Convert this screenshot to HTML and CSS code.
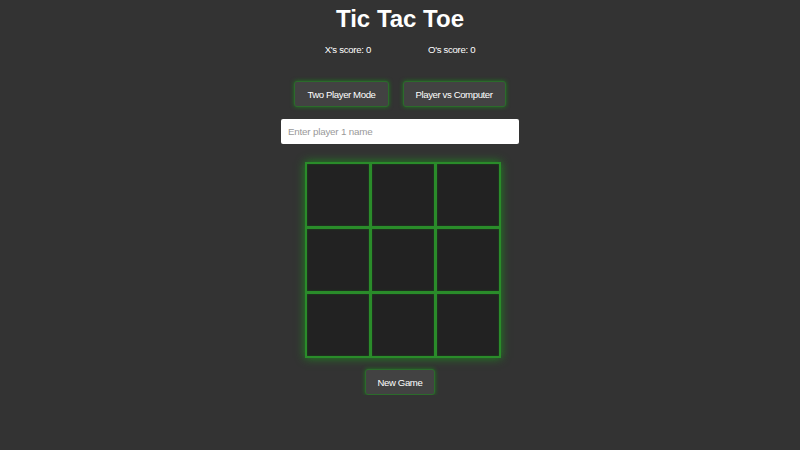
FILE: index.html
```html
<!DOCTYPE html>
<html>
  <head>
    <title>Tic Tac Toe</title>
    <meta charset="UTF-8" />
    <link rel="stylesheet" href="styles.css">
  </head>
  <body>
    <h1>Tic Tac Toe</h1>

    <div class="scores">
      <span id="xScore">X's score: 0</span>
      <span id="oScore">O's score: 0</span>
    </div>

    <div class="modes">
      <button class="btn">Two Player Mode</button>
      <button class="btn">Player vs Computer</button>
    </div>

    <input type="text" id="playerName" placeholder="Enter player 1 name" />

    <div class="board">
      <div class="cell"></div>
      <div class="cell"></div>
      <div class="cell"></div>
      <div class="cell"></div>
      <div class="cell"></div>
      <div class="cell"></div>
      <div class="cell"></div>
      <div class="cell"></div>
      <div class="cell"></div>
    </div>

    <button class="btn new-game">New Game</button>
  </body>
</html>
```

FILE: styles.css
```css
body {
  font-family: "Liberation Sans", Arial, sans-serif;
  background-color: #333;
  color: #fff;
  margin: 0;
  padding: 5px 0 0;
  display: flex;
  flex-direction: column;
  align-items: center;
}

h1 {
  font-size: 24px;
  margin: 0;
  line-height: 28px;
}

.scores {
  display: flex;
  gap: 57px;
  font-size: 9.6px;
  letter-spacing: -0.3px;
  line-height: 14px;
  margin-top: 10px;
}

.modes {
  display: flex;
  gap: 14px;
  margin-top: 24px;
}

.btn {
  font-family: "Liberation Sans", Arial, sans-serif;
  font-size: 9.6px;
  letter-spacing: -0.4px;
  color: #fff;
  background-color: #424242;
  border: 1px solid #2b6b2b;
  border-radius: 3px;
  box-shadow: 0 0 4px #1e7a1e;
  padding: 0 12px;
  height: 26px;
  cursor: pointer;
}

#playerName {
  margin-top: 12px;
  width: 238px;
  height: 25px;
  box-sizing: border-box;
  border: none;
  border-radius: 2px;
  padding: 0 7px;
  font-family: "Liberation Sans", Arial, sans-serif;
  font-size: 9.8px;
  letter-spacing: -0.2px;
}

#playerName::placeholder {
  color: #999;
}

.board {
  margin-top: 18px;
  margin-left: 6px;
  display: grid;
  grid-template-columns: repeat(3, 62px);
  grid-template-rows: repeat(3, 62px);
  gap: 3px;
  padding: 2px;
  background-color: #2a8c2a;
  box-shadow: 0 0 9px #1f8a1f;
}

.cell {
  background-color: #222;
  box-shadow: inset 0 0 2px #1a5a1a;
}

.new-game {
  margin-top: 11px;
}
```
